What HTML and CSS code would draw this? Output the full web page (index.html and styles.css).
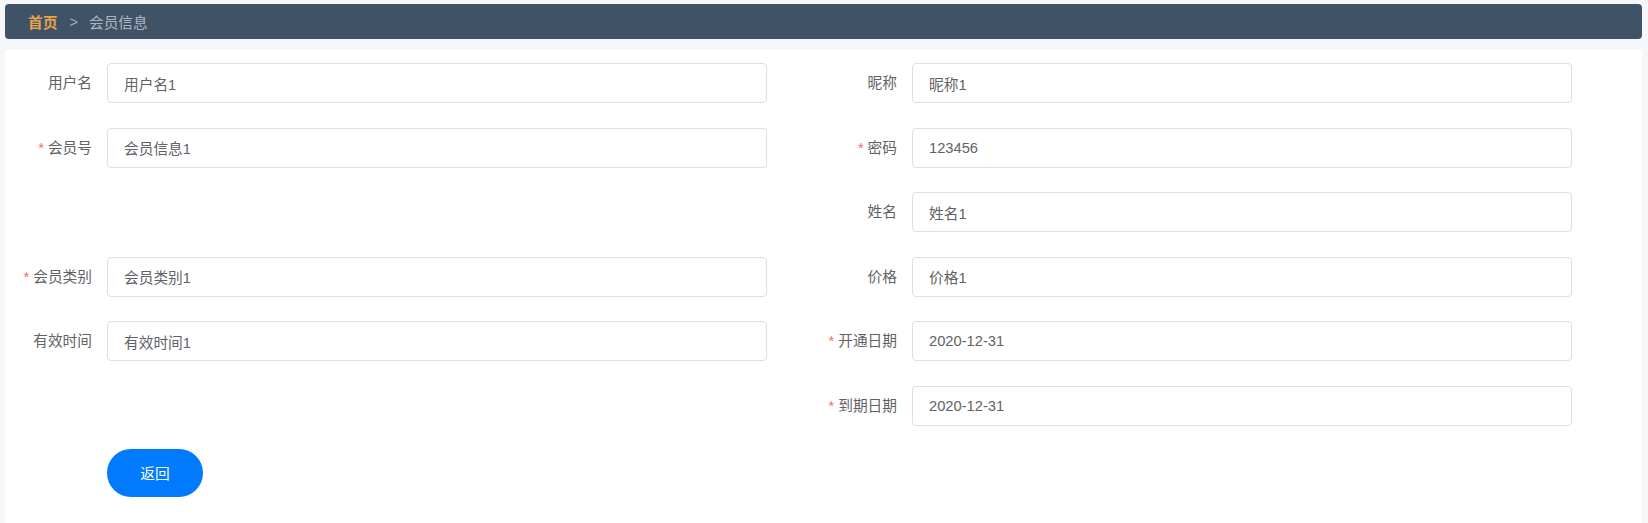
FILE: index.html
```html
<!DOCTYPE html>
<html lang="zh-CN">
<head>
<meta charset="utf-8">
<title>会员信息</title>
<link rel="stylesheet" href="styles.css">
</head>
<body>
<div class="crumb">
  <span class="crumb-home">首页</span><span class="crumb-sep">&gt;</span><span class="crumb-cur">会员信息</span>
</div>
<div class="card">
  <div class="form">
    <div class="item"><label class="label">用户名</label><input class="input" readonly value="用户名1"></div>
    <div class="item"><label class="label">昵称</label><input class="input" readonly value="昵称1"></div>

    <div class="item"><label class="label"><span class="req">*</span>会员号</label><input class="input" readonly value="会员信息1"></div>
    <div class="item"><label class="label"><span class="req">*</span>密码</label><input class="input" readonly value="123456"></div>

    <div class="item empty"></div>
    <div class="item"><label class="label">姓名</label><input class="input" readonly value="姓名1"></div>

    <div class="item"><label class="label"><span class="req">*</span>会员类别</label><input class="input" readonly value="会员类别1"></div>
    <div class="item"><label class="label">价格</label><input class="input" readonly value="价格1"></div>

    <div class="item"><label class="label">有效时间</label><input class="input" readonly value="有效时间1"></div>
    <div class="item"><label class="label"><span class="req">*</span>开通日期</label><input class="input" readonly value="2020-12-31"></div>

    <div class="item empty"></div>
    <div class="item"><label class="label"><span class="req">*</span>到期日期</label><input class="input" readonly value="2020-12-31"></div>
  </div>
  <div class="actions">
    <button class="btn" type="button">返回</button>
  </div>
</div>
</body>
</html>
```
FILE: styles.css
```css
html, body {
  margin: 0;
  padding: 0;
}
body {
  background: #f5f7fa;
  font-family: "Liberation Sans", "Noto Sans CJK SC", sans-serif;
  font-size: 14.7px;
  color: #606266;
  overflow: hidden;
}
.crumb {
  margin: 4px 6px 0 5px;
  height: 35px;
  background: #405266;
  border-radius: 4px;
  display: flex;
  align-items: center;
  padding-left: 23px;
  font-size: 14.7px;
}
.crumb-home {
  color: #e4a24b;
  font-weight: bold;
}
.crumb-sep {
  color: #a6b0bd;
  margin: 0 11px 0 12px;
}
.crumb-cur {
  color: #aab6c4;
}
.card {
  margin: 11px 6px 0 5px;
  background: #ffffff;
  padding: 13px 0 0 7px;
  min-height: 470px;
}
.form {
  display: grid;
  grid-template-columns: 805px 805px;
  row-gap: 24.6px;
}
.item {
  display: flex;
  align-items: center;
  height: 40px;
}
.label {
  width: 80px;
  padding-right: 15px;
  text-align: right;
  color: #606266;
  line-height: 40px;
  white-space: nowrap;
}
.req {
  color: #f56c6c;
  margin-right: 4px;
}
.input {
  box-sizing: border-box;
  width: 660px;
  height: 40px;
  border: 1px solid #dcdfe6;
  border-radius: 4px;
  padding: 0 16px;
  font: inherit;
  color: #606266;
  background: #fff;
  outline: none;
}
.actions {
  padding-left: 95px;
  margin-top: 23px;
}
.btn {
  width: 96px;
  height: 48px;
  border: none;
  border-radius: 24px;
  background: #007bff;
  color: #ffffff;
  font: inherit;
  cursor: pointer;
}
```
